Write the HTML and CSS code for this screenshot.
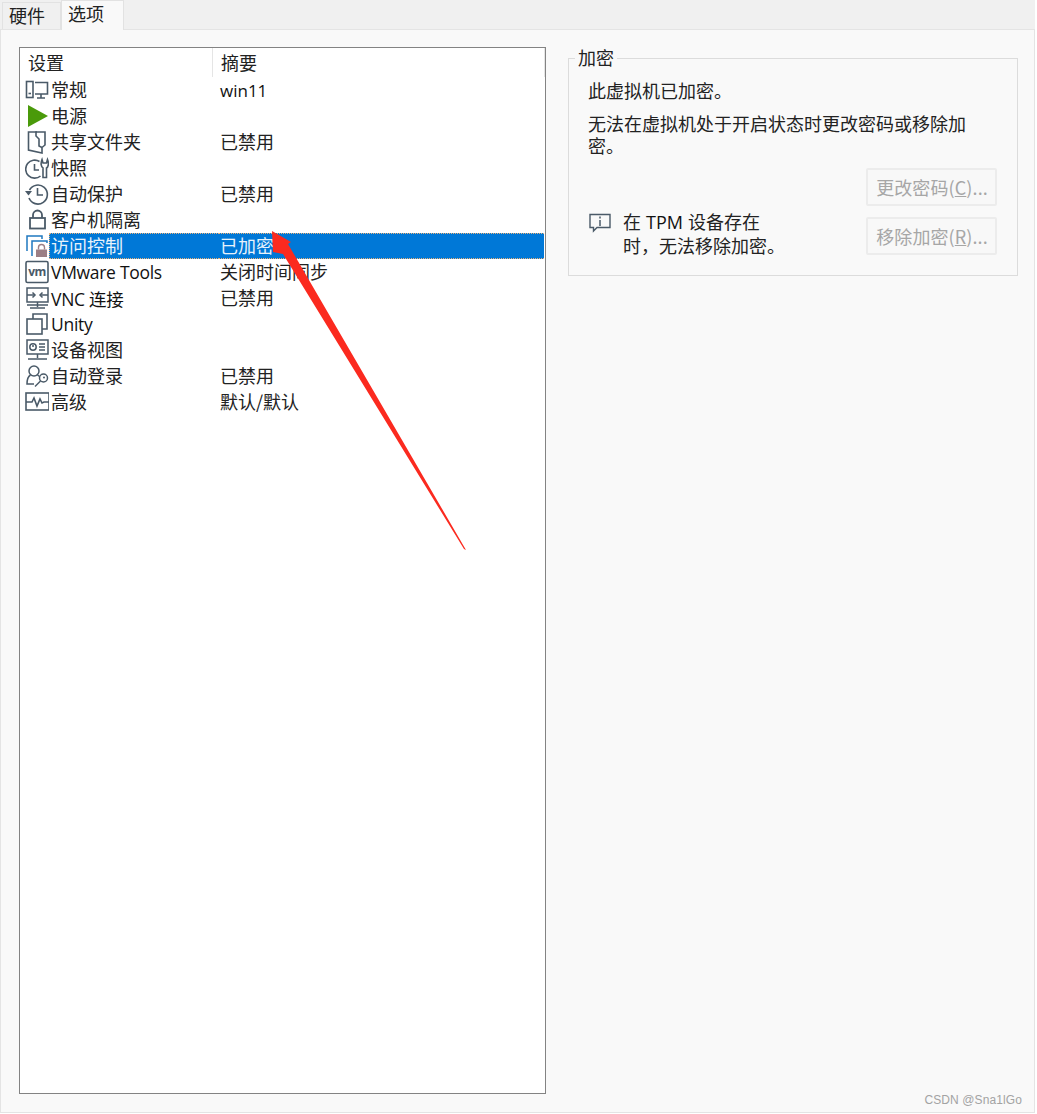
FILE: index.html
```html
<!DOCTYPE html>
<html lang="zh">
<head>
<meta charset="utf-8">
<title>选项</title>
<link rel="stylesheet" href="styles.css">
</head>
<body>
<div class="window">
  <div class="tabs">
    <div class="tab">硬件</div>
    <div class="tab active">选项</div>
  </div>
  <div class="panel">
    <div class="list">
      <div class="list-head">
        <div class="head-a">设置</div>
        <div class="head-b">摘要</div>
      </div>
      <div class="row">
        <svg class="ico" viewBox="0 0 24 24"><g fill="none" stroke="#4a5a68" stroke-width="1.600"><rect x="1.500" y="3.500" width="6.500" height="16"/><path d="M10 4.500h12.500v11.500H10M16 16v3.500M12 20h8"/><path d="M3.500 15.500h2.500"/></g></svg>
        <span class="name">常规</span><span class="sum lat">win11</span>
      </div>
      <div class="row">
        <svg class="ico" viewBox="0 0 24 24"><path d="M3 1L23 12 3 23z" fill="#4a9a0a"/></svg>
        <span class="name">电源</span><span class="sum"></span>
      </div>
      <div class="row">
        <svg class="ico" viewBox="0 0 24 24"><g fill="none" stroke="#4a5a68" stroke-width="1.600"><path d="M3.500 2h16.500v13l-3 2.500v5.500L3.500 20z"/><path d="M12 2l-1 0v4l3 3v7l3 1.500"/></g></svg>
        <span class="name">共享文件夹</span><span class="sum">已禁用</span>
      </div>
      <div class="row">
        <svg class="ico" viewBox="0 0 24 24"><g fill="none" stroke="#4a5a68" stroke-width="1.600"><path d="M14.500 5.500A9 9 0 1 0 15.500 20"/><path d="M9.500 8v6h4.500"/><path d="M18 12v9.500h3.500v-9.500c2-1 2.500-5 1-8.500l-1 3.500h-3.500l-1-3.500c-1.500 3.500-1 7.500 1 8.500z"/></g></svg>
        <span class="name">快照</span><span class="sum"></span>
      </div>
      <div class="row">
        <svg class="ico" viewBox="0 0 24 24"><g fill="none" stroke="#4a5a68" stroke-width="1.600"><path d="M4.500 8A9.500 9.500 0 1 1 4 16"/><path d="M12.500 6v7h5.500"/></g><path d="M0 9h7l-3.500 4.500z" fill="#4a5a68"/></svg>
        <span class="name">自动保护</span><span class="sum">已禁用</span>
      </div>
      <div class="row">
        <svg class="ico" viewBox="0 0 24 24"><g fill="none" stroke="#4a5a68" stroke-width="1.800"><rect x="5" y="10" width="15" height="10.500"/><path d="M8 10V7a4.500 4.500 0 0 1 9 0v3"/></g></svg>
        <span class="name">客户机隔离</span><span class="sum"></span>
      </div>
      <div class="row selected">
        <svg class="ico" viewBox="0 0 24 24"><g fill="none" stroke="#1f78c0" stroke-width="1.500"><path d="M2 17V2h15v3"/><path d="M7 22V7h15v2"/></g><path d="M11 15.500h11V23H11z" fill="#9c7f85"/><path d="M13.500 15.500v-2a3 3 0 0 1 6 0v2" fill="none" stroke="#9c7f85" stroke-width="1.400"/></svg>
        <span class="name">访问控制</span><span class="sum">已加密</span>
      </div>
      <div class="row">
        <svg class="ico" viewBox="0 0 24 24"><rect x="1" y="1.500" width="22" height="21" rx="1.500" fill="none" stroke="#4a5a68" stroke-width="1.600"/><text x="12" y="16" class="vm">vm</text></svg>
        <span class="name tight">VMware Tools</span><span class="sum">关闭时间同步</span>
      </div>
      <div class="row">
        <svg class="ico" viewBox="0 0 24 24"><g fill="none" stroke="#4a5a68" stroke-width="1.500"><path d="M2 2h21v14H2zM12.500 16v5M5 22h15M2 19h21M2 9h8M23 9h-8"/><path d="M7.500 6.500L10 9l-2.500 2.500M17.500 6.500L15 9l2.500 2.500"/></g></svg>
        <span class="name tight">VNC 连接</span><span class="sum">已禁用</span>
      </div>
      <div class="row">
        <svg class="ico" viewBox="0 0 24 24"><g fill="none" stroke="#4a5a68" stroke-width="1.600"><rect x="2" y="7" width="15" height="15"/><path d="M8 7V2h14v15h-5"/></g></svg>
        <span class="name tight">Unity</span><span class="sum"></span>
      </div>
      <div class="row">
        <svg class="ico" viewBox="0 0 24 24"><g fill="none" stroke="#4a5a68" stroke-width="1.500"><path d="M2 2h21v14H2zM12.500 16v4M3 21h19"/><circle cx="8" cy="9" r="3.200"/><path d="M8 7v2M14 6h6M14 9h6M14 12h6"/></g></svg>
        <span class="name">设备视图</span><span class="sum"></span>
      </div>
      <div class="row">
        <svg class="ico" viewBox="0 0 24 24"><g fill="none" stroke="#4a5a68" stroke-width="1.500"><circle cx="9" cy="7" r="5"/><path d="M5.500 11C3 12.500 2 15.500 2 20h7"/><path d="M12.500 11l2 1.500"/><circle cx="18.500" cy="14" r="4"/><path d="M15.500 17l-5.500 5.500"/></g><circle cx="19" cy="13.500" r="1" fill="#4a5a68"/></svg>
        <span class="name">自动登录</span><span class="sum">已禁用</span>
      </div>
      <div class="row">
        <svg class="ico" viewBox="0 0 24 24"><g fill="none" stroke="#4a5a68" stroke-width="1.600"><rect x="1" y="3" width="23" height="17"/><path d="M1 12h6l2-4 3 8 3-7 2 4 2-1h5"/></g></svg>
        <span class="name">高级</span><span class="sum">默认/默认</span>
      </div>
    </div>
    <div class="group">
      <div class="legend">加密</div>
      <p class="line first">此虚拟机已加密。</p>
      <p class="line para">无法在虚拟机处于开启状态时更改密码或移除加密。</p>
      <div class="actions">
        <div class="note">
          <svg class="info" viewBox="0 0 22 20"><path d="M1 1.500h20v13H8l-3.500 3.500v-3.500H1z" fill="none" stroke="#4a5a68" stroke-width="1.400"/><path d="M11 3.500v2M11 7v6" stroke="#4a5a68" stroke-width="1.500"/></svg>
          <div class="note-text">在 <span class="lat">TPM</span> 设备存在<br>时，无法移除加密。</div>
        </div>
        <div class="buttons">
          <div class="btn">更改密码(<u>C</u>)...</div>
          <div class="btn">移除加密(<u>R</u>)...</div>
        </div>
      </div>
    </div>
  </div>
</div>
<svg class="arrow" viewBox="0 0 1037 1114"><path d="M272 231L291 242 288 244 466 550 464 549 283 254 273 252z" fill="#fb2a1f"/></svg>
<div class="mark">CSDN @Sna1lGo</div>
</body>
</html>
```
FILE: styles.css
```css
* { box-sizing: border-box; }
html, body { margin: 0; height: 100%; background: #fff; }
body {
  width: 1037px;
  height: 1114px;
  overflow: hidden;
  position: relative;
  font-family: "Noto Sans", "Noto Sans CJK SC", sans-serif;
  font-size: 18px;
  color: #222;
}
.window { width: 1035px; height: 1113px; display: flex; flex-direction: column; background: #f0f0f0; }
.tabs { height: 29px; display: flex; align-items: flex-end; flex: none; padding-left: 2px; }
.tab {
  width: 59px;
  height: 27px;
  line-height: 24px;
  padding-left: 6px;
  background: #f0f0f0;
  border: 1px solid #e2e2e2;
  border-bottom: none;
  font-family: "Noto Sans CJK SC", sans-serif;
  font-size: 18px;
}
.tab.active {
  width: 63px;
  height: 30px;
  margin-bottom: -1px;
  background: #f9f9f9;
  position: relative;
  z-index: 1;
}
.panel {
  flex: 1;
  display: flex;
  align-items: flex-start;
  padding: 17px 16px 0 19px;
  gap: 22px;
  background: #f9f9f9;
  border: 1px solid #e4e4e4;
}
.list {
  width: 527px;
  height: 1047px;
  flex: none;
  background: #fff;
  border: 1px solid #838383;
  margin-left: -1px;
}
.list-head { height: 29px; display: flex; align-items: center; }
.head-a { width: 193px; padding-left: 8px; border-right: 1px solid #e5e5e5; height: 100%; line-height: 30px; }
.head-b { flex: 1; padding-left: 8px; border-right: 1px solid #e5e5e5; height: 100%; line-height: 30px; }
.row {
  height: 26px;
  display: flex;
  align-items: center;
  padding-left: 5px;
  font-family: "Noto Sans CJK SC", sans-serif;
  margin-right: 1px;
}
.ico { width: 24px; height: 24px; flex: none; }
.name { width: 170px; padding-left: 2px; padding-bottom: 2px; flex: none; white-space: nowrap; }
.name.tight { padding-left: 2px; padding-bottom: 0; font-family: "Open Sans", "Noto Sans CJK SC", sans-serif; font-size: 17.500px; color: #111; letter-spacing: -.3px; }
.sum { padding-left: 1px; padding-bottom: 2px; white-space: nowrap; }
.lat { font-family: "Open Sans", "Noto Sans CJK SC", sans-serif; color: #111; }
.sum.lat { font-size: 17px; padding-left: 1px; padding-bottom: 0; }
.selected .name, .selected .sum {
  height: 26px;
  line-height: 23px;
  padding-bottom: 0;
  color: #e8f2fb;
  background: #0078d7;
  border-top: 1px dotted #e8b27c;
  border-bottom: 1px dotted #e8b27c;
}
.selected .name { border-left: 1px dotted #e8b27c; padding-left: 1px; }
.selected .sum { flex: 1; }
.vm { font-family: "Open Sans", sans-serif; font-size: 12px; font-weight: 700; fill: #4a5a68; text-anchor: middle; letter-spacing: -.5px; }
.group {
  position: relative;
  width: 450px;
  height: 218px;
  margin-top: 11px;
  border: 1px solid #dcdcdc;
  padding: 19px 20px 0 19px;
  font-family: "Noto Sans CJK SC", sans-serif;
}
.legend { position: absolute; left: 6px; top: -14px; padding: 0 3px; line-height: 24px; background: #f9f9f9; }
.line { margin: 0; line-height: 25px; }
.para { margin-top: 9px; width: 385px; line-height: 22px; }
.actions { display: flex; justify-content: space-between; margin-top: 12px; }
.note { display: flex; padding-top: 42px; gap: 12px; }
.info { width: 22px; height: 20px; flex: none; margin-top: 3px; margin-left: 1px; }
.note-text { white-space: nowrap; line-height: 22.500px; word-spacing: 1px; }
.buttons { display: flex; flex-direction: column; gap: 11px; }
.btn {
  width: 131px;
  height: 38px;
  line-height: 34px;
  padding-left: 1px;
  text-align: center;
  background: #f8f8f8;
  border: 2px solid #ececec;
  border-radius: 2px;
  color: #a6a6a6;
  white-space: nowrap;
  letter-spacing: .1px;
}
.arrow { position: absolute; left: 0; top: 0; width: 1037px; height: 1114px; pointer-events: none; }
.mark { position: absolute; right: 15px; top: 1092px; font-family: "Liberation Sans", sans-serif; font-size: 12px; line-height: 16px; color: #a3a3a3; letter-spacing: .1px; }
```
